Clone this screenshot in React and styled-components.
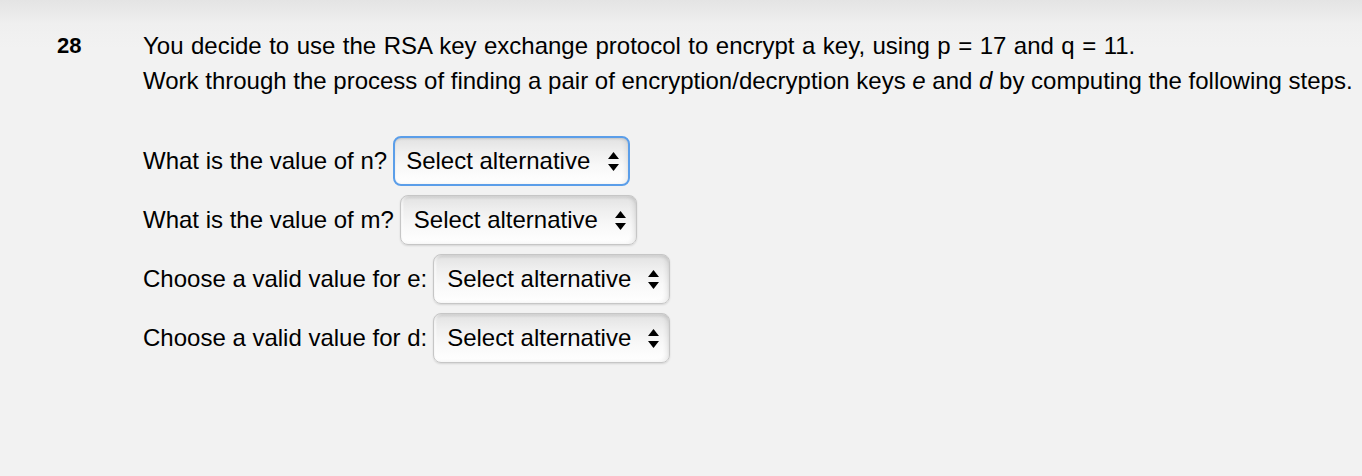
import React from "react";
import styled, { createGlobalStyle } from "styled-components";

const Global = createGlobalStyle`
  html, body { margin: 0; padding: 0; }
  body {
    background: linear-gradient(to bottom, #e4e4e4 0px, #efefef 24px, #f2f2f2 48px, #f2f2f2 100%);
    min-height: 476px;
    font-family: "Liberation Sans", Arial, Helvetica, sans-serif;
    color: #000;
  }
`;

const Page = styled.div`
  display: grid;
  grid-template-columns: 86px 1fr;
  padding: 28px 0 0 57px;
`;

const Number = styled.div`
  font-weight: bold;
  font-size: 22px;
  line-height: 35px;
`;

const Body = styled.div`
  display: flex;
  flex-direction: column;
`;

const Intro = styled.p`
  margin: 0;
  font-size: 24px;
  line-height: 35px;
`;

const Line = styled.span`
  display: block;
  word-spacing: ${(p) => p.$wordSpacing || "0px"};
`;

const Questions = styled.div`
  display: flex;
  flex-direction: column;
  gap: 9px;
  margin-top: 38px;
`;

const Row = styled.label`
  display: flex;
  align-items: center;
  gap: 6px;
  font-size: 24px;
`;

const Select = styled.div`
  box-sizing: border-box;
  display: flex;
  align-items: center;
  justify-content: space-between;
  width: 237px;
  height: 50px;
  padding: ${(p) => (p.$focused ? "0 9px 0 11px" : "0 10px 0 13px")};
  border-radius: 8px;
  border: ${(p) => (p.$focused ? "2px solid #5b9ee9" : "1px solid #c6c6c6")};
  background: linear-gradient(to bottom, #e2e2e2 0%, #efefef 30%, #f8f8f8 60%, #ffffff 100%);
  box-shadow: ${(p) =>
    p.$focused
      ? "inset -3px 0 4px rgba(0,0,0,0.06), inset 0 1px 2px rgba(0,0,0,0.1)"
      : "0 1px 2px rgba(0,0,0,0.12), inset -3px 0 4px rgba(0,0,0,0.07), inset 0 2px 3px rgba(0,0,0,0.08), inset 2px 0 2px rgba(255,255,255,0.8)"};
  font-size: 24px;
  color: #000;
`;

const Arrows = () => (
  <svg width="11" height="19" viewBox="0 0 11 19">
    <polygon points="5.5,0 11,7 0,7" fill="#000" />
    <polygon points="0,12 11,12 5.5,19" fill="#000" />
  </svg>
);

const questions = [
  { label: "What is the value of n?", focused: true },
  { label: "What is the value of m?" },
  { label: "Choose a valid value for e:" },
  { label: "Choose a valid value for d:" },
];

export default function App() {
  return (
    <>
      <Global />
      <Page>
        <Number>28</Number>
        <Body>
          <Intro>
            <Line $wordSpacing="0.8px">
              You decide to use the RSA key exchange protocol to encrypt a key, using p = 17 and q = 11.
            </Line>
            <Line>
              Work through the process of finding a pair of encryption/decryption keys <i>e</i> and <i>d</i> by computing the following steps.
            </Line>
          </Intro>
          <Questions>
            {questions.map((q) => (
              <Row key={q.label}>
                <span>{q.label}</span>
                <Select $focused={q.focused}>
                  <span>Select alternative</span>
                  <Arrows />
                </Select>
              </Row>
            ))}
          </Questions>
        </Body>
      </Page>
    </>
  );
}
